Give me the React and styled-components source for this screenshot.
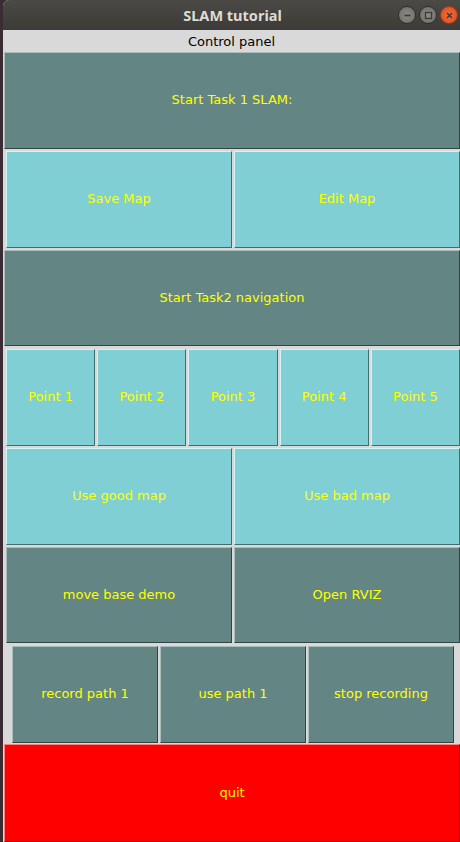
import React from 'react'
import styled, { createGlobalStyle } from 'styled-components'

const GlobalStyle = createGlobalStyle`
  html, body {
    margin: 0;
    padding: 0;
    background: #3b2b32;
    overflow: hidden;
  }
`;

const Window = styled.div`
  margin-left: 3px;
  width: 457px;
  height: 842px;
  display: flex;
  flex-direction: column;
  background: #d9d9d9;
  border-top-left-radius: 6px;
  overflow: hidden;
`;

const TitleBar = styled.div`
  position: relative;
  height: 30px;
  flex: none;
  display: flex;
  align-items: center;
  justify-content: center;
  background: linear-gradient(#4b4a45, #3c3b37);
  color: #dfdbd2;
  font-family: "Noto Sans", "DejaVu Sans", sans-serif;
  font-weight: bold;
  font-size: 14.5px;
  padding-left: 2px;
`;

const WinControls = styled.div`
  position: absolute;
  right: 2px;
  top: 6px;
  display: flex;
  gap: 3px;
`;

const WinButton = styled.div`
  width: 18px;
  height: 18px;
  border-radius: 50%;
  background: ${p => (p.close ? 'radial-gradient(#f0713e, #dc4a1a)' : 'radial-gradient(#8c8a85, #6c6b66)')};
  border: 1px solid ${p => (p.close ? '#a33a14' : '#2f2e2b')};
  box-sizing: border-box;
  display: flex;
  align-items: center;
  justify-content: center;
`;

const Label = styled.div`
  height: 22px;
  flex: none;
  display: flex;
  align-items: center;
  justify-content: center;
  font-family: "DejaVu Sans", sans-serif;
  font-size: 13px;
  color: #000;
`;

const Row = styled.div`
  height: ${p => p.h}px;
  flex: none;
  display: flex;
  gap: 2px;
  padding: ${p => p.pad || '0 0 0 1px'};
  box-sizing: border-box;
`;

const Button = styled.button`
  flex: 1;
  margin: 0;
  padding: 0 0 2px;
  font-family: "DejaVu Sans", sans-serif;
  font-size: 13px;
  color: #ffff00;
  background: ${p => p.bg};
  border: 1px solid;
  border-color: ${p => p.light} ${p => p.dark} ${p => p.dark} ${p => p.light};
  cursor: pointer;
`;

const teal = { bg: '#638684', light: '#a9bebc', dark: '#2f4544' };
const cyan = { bg: '#7fcfd5', light: '#d4f3f5', dark: '#3d6e72' };
const red = { bg: '#ff0000', light: '#ff8080', dark: '#9a0000' };

const Minimize = () => (
  <svg width="9" height="9" viewBox="0 0 9 9">
    <path d="M1.5 4.5h6" stroke="#3c3b37" strokeWidth="1.6" />
  </svg>
);

const Maximize = () => (
  <svg width="9" height="9" viewBox="0 0 9 9">
    <rect x="1.5" y="1.5" width="6" height="6" fill="none" stroke="#3c3b37" strokeWidth="1.3" />
  </svg>
);

const Close = () => (
  <svg width="9" height="9" viewBox="0 0 9 9">
    <path d="M2 2l5 5M7 2l-5 5" stroke="#3c3b37" strokeWidth="1.5" />
  </svg>
);

export default function App() {
  return (
    <>
      <GlobalStyle />
      <Window>
        <TitleBar>
          SLAM tutorial
          <WinControls>
            <WinButton><Minimize /></WinButton>
            <WinButton><Maximize /></WinButton>
            <WinButton close><Close /></WinButton>
          </WinControls>
        </TitleBar>
        <Label>Control panel</Label>
        <Row h={98} pad="0 0 1px 1px">
          <Button {...teal}>Start Task 1 SLAM:</Button>
        </Row>
        <Row h={99} pad="1px 0 1px 3px">
          <Button {...cyan}>Save Map</Button>
          <Button {...cyan}>Edit Map</Button>
        </Row>
        <Row h={99} pad="1px 0 2px 1px">
          <Button {...teal}>Start Task2 navigation</Button>
        </Row>
        <Row h={99} pad="1px 0 1px 3px">
          {[1, 2, 3, 4, 5].map(n => (
            <Button key={n} {...cyan}>Point {n}</Button>
          ))}
        </Row>
        <Row h={99} pad="1px 0 1px 3px">
          <Button {...cyan}>Use good map</Button>
          <Button {...cyan}>Use bad map</Button>
        </Row>
        <Row h={99} pad="1px 0 2px 3px">
          <Button {...teal}>move base demo</Button>
          <Button {...teal}>Open RVIZ</Button>
        </Row>
        <Row h={99} pad="1px 6px 1px 9px">
          <Button {...teal}>record path 1</Button>
          <Button {...teal}>use path 1</Button>
          <Button {...teal}>stop recording</Button>
        </Row>
        <Row h={98} pad="0 0 0 1px">
          <Button {...red}>quit</Button>
        </Row>
      </Window>
    </>
  );
}
